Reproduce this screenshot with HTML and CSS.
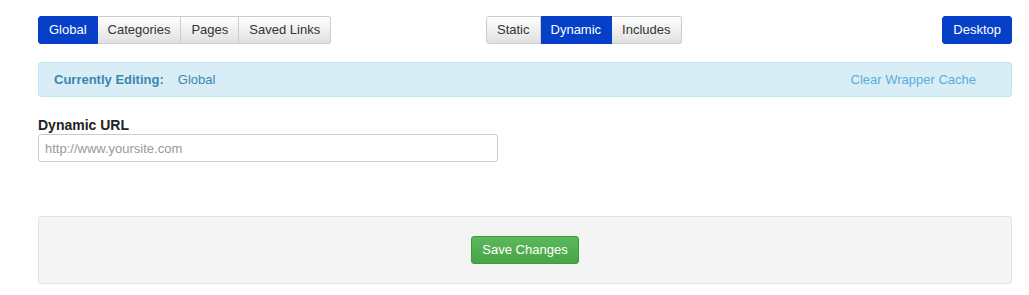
FILE: index.html
```html
<!DOCTYPE html>
<html lang="en">
<head>
  <meta charset="UTF-8" />
  <title>Wrapper Editor</title>
  <link rel="stylesheet" href="styles.css">
</head>
<body>
<div class="container">
  <div class="toolbar">
    <div class="btn-group">
      <button class="btn active">Global</button>
      <button class="btn">Categories</button>
      <button class="btn">Pages</button>
      <button class="btn">Saved Links</button>
    </div>
    <div class="btn-group">
      <button class="btn">Static</button>
      <button class="btn active">Dynamic</button>
      <button class="btn">Includes</button>
    </div>
    <div class="btn-group right">
      <button class="btn active single">Desktop</button>
    </div>
  </div>

  <div class="alert">
    <span><strong>Currently Editing:</strong><span class="current">Global</span></span>
    <a href="#" class="clear-link">Clear Wrapper Cache</a>
  </div>

  <div class="form-group">
    <label for="dynamic-url">Dynamic URL</label>
    <input type="text" id="dynamic-url" placeholder="http://www.yoursite.com">
  </div>

  <div class="well">
    <button class="btn-save">Save Changes</button>
  </div>
</div>
</body>
</html>
```

FILE: styles.css
```css
body {
  font-family: "Liberation Sans", Arial, sans-serif;
  font-size: 13px;
  color: #333;
  margin: 0;
  padding: 16px 17px 0 38px;
  background-color: #fff;
}
.container {
  width: 974px;
}
.toolbar {
  display: grid;
  grid-template-columns: 448px auto 1fr;
  align-items: center;
}
.btn-group {
  display: flex;
}
.btn-group.right {
  justify-content: flex-end;
}
.btn {
  font-family: inherit;
  font-size: 13px;
  line-height: 18px;
  padding: 4px 10px;
  color: #333;
  background: linear-gradient(#fff, #e0e0e0);
  border: 1px solid #ccc;
  border-left-width: 0;
  cursor: pointer;
}
.btn:first-child {
  border-left-width: 1px;
  border-radius: 3px 0 0 3px;
}
.btn:last-child {
  border-radius: 0 3px 3px 0;
}
.btn.active {
  background: #0640c8;
  border-color: #0640c8;
  color: #fff;
}
.btn.single {
  border-radius: 3px;
}
.alert {
  display: flex;
  justify-content: space-between;
  margin-top: 18px;
  padding: 8px 35px 8px 15px;
  line-height: 17px;
  background-color: #d9edf7;
  border: 1px solid #bce8f1;
  border-radius: 3px;
  color: #31708f;
}
.alert strong {
  color: #3a87ad;
}
.current {
  margin-left: 14px;
  color: #3a87ad;
}
.clear-link {
  color: #5aaedb;
  text-decoration: none;
}
.form-group {
  margin-top: 20px;
}
label {
  display: block;
  font-weight: bold;
  font-size: 14px;
  color: #222;
  margin-bottom: 1px;
}
input[type="text"] {
  box-sizing: border-box;
  width: 460px;
  height: 28px;
  padding: 4px 6px;
  font-family: inherit;
  font-size: 13px;
  border: 1px solid #ccc;
  border-radius: 3px;
  color: #555;
}
input::placeholder {
  color: #999;
}
.well {
  margin-top: 54px;
  padding: 19px;
  text-align: center;
  background-color: #f4f4f4;
  border: 1px solid #e3e3e3;
  border-radius: 3px;
}
.btn-save {
  font-family: inherit;
  font-size: 13px;
  line-height: 18px;
  padding: 4px 10px;
  color: #fff;
  background: linear-gradient(#5cb85c, #47a447);
  border: 1px solid #3e9a3e;
  border-radius: 3px;
  cursor: pointer;
}
```
